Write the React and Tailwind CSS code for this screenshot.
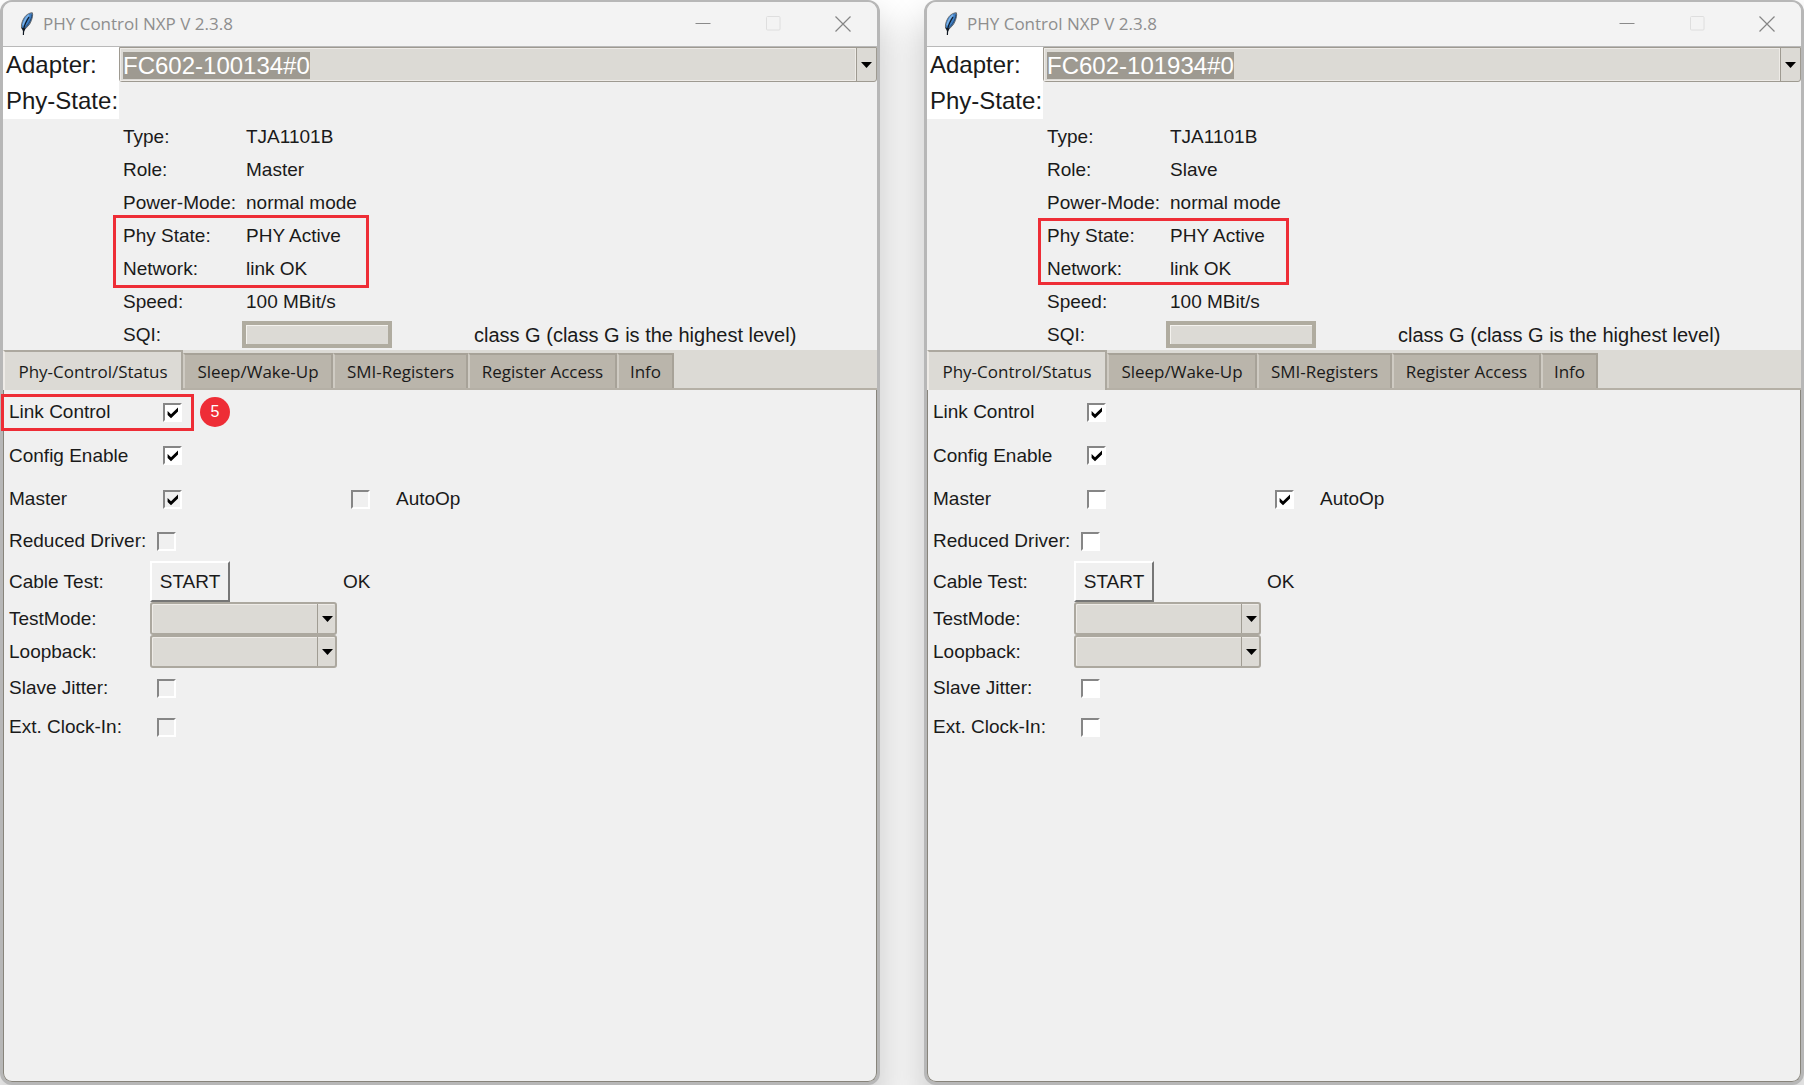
import { useId, useState } from "react";

const tabs = [
  { name: "Phy-Control/Status", width: "w-[180px]" },
  { name: "Sleep/Wake-Up", width: "w-[150px]" },
  { name: "SMI-Registers", width: "w-[135px]" },
  { name: "Register Access", width: "w-[149px]" },
  { name: "Info", width: "w-[57px]" },
];

function FeatherIcon() {
  return (
    <svg className="w-4 h-6 shrink-0" viewBox="0 0 16 24" aria-hidden="true">
      <path d="M13.4 0.8 C9.8 0.8 6.4 3.4 4.6 6.8 C2.8 10 2 13.6 2.6 16.2 L4.6 17.6 C8 16 11 12.4 12.4 8.4 C13.4 5.6 14 2.6 13.4 0.8Z" fill="#3f7fc4" stroke="#6b6b6b" strokeWidth="1" />
      <path d="M10 2.8 C7 5.6 5 9.4 4 13.4" fill="none" stroke="#7db4ea" strokeWidth="1.6" />
      <path d="M13 2.4 C12.6 7.4 9.6 12.6 5.6 16" fill="none" stroke="#24466e" strokeWidth="1" />
      <path d="M10 5 C7.4 9 5.4 13 4.6 17 L4.4 23" fill="none" stroke="#101822" strokeWidth="1.2" />
      <path d="M2.4 15.4 L6.6 16.4 L4.6 20.6Z" fill="#101822" />
    </svg>
  );
}

function Arrow() {
  return (
    <svg className="w-[11px] h-[6px]" viewBox="0 0 11 6" aria-hidden="true">
      <path d="M0 0 H11 L5.5 6Z" fill="#000" />
    </svg>
  );
}

function TitleBar() {
  return (
    <div className="h-[45px] flex items-center justify-between pl-4 pr-[26px] rounded-t-[9px] bg-[#f3f3f3] border-b border-[#b9b9b9]">
      <div className="flex items-center gap-2">
        <FeatherIcon />
        <h1 className="font-['Open_Sans',sans-serif] text-[17px] leading-6 text-[#8e8e8e]">PHY Control NXP V 2.3.8</h1>
      </div>
      <div className="flex items-center gap-[54px]">
        <button aria-label="Minimize" className="w-4 h-4 flex items-center">
          <svg className="w-4 h-4" viewBox="0 0 16 16"><path d="M0.5 7.5 H15.5" stroke="#8a8a8a" /></svg>
        </button>
        <button aria-label="Maximize" disabled className="w-4 h-4">
          <svg className="w-4 h-4" viewBox="0 0 16 16"><rect x="1.5" y="0.5" width="13.5" height="13.5" rx="1" fill="none" stroke="#dedede" /></svg>
        </button>
        <button aria-label="Close" className="w-4 h-4">
          <svg className="w-4 h-4" viewBox="0 0 16 16"><path d="M0.5 0.5 L15.5 15.5 M15.5 0.5 L0.5 15.5" stroke="#858585" strokeWidth="1.2" /></svg>
        </button>
      </div>
    </div>
  );
}

function StateRow({ label, children }) {
  return (
    <div className="h-[33px] flex items-center">
      <dt className="w-[124px] pl-px">{label}</dt>
      <dd className="flex items-center">{children}</dd>
    </div>
  );
}

function Check({ id, label, checked, grey }) {
  const [on, setOn] = useState(checked);
  return (
    <span className="grid w-[19px] h-[19px] shrink-0">
      <input
        id={id}
        type="checkbox"
        aria-label={label}
        checked={on}
        onChange={() => setOn(!on)}
        className={`appearance-none [grid-area:1/1] w-[19px] h-[19px] border-2 border-t-[#868686] border-l-[#868686] border-r-white border-b-white ${grey ? "bg-[#f0f0f0]" : "bg-white"}`}
      />
      {on && (
        <svg className="[grid-area:1/1] w-[19px] h-[19px] pointer-events-none" viewBox="0 0 19 19" aria-hidden="true">
          <path d="M4.6 8 L8 11.2 L15 4.6 V8.6 L8 15.2 L4.6 12Z" fill="#000" />
        </svg>
      )}
    </span>
  );
}

function Combo({ id }) {
  return (
    <span className="relative w-[187px] h-[33px]">
      <select id={id} className="appearance-none w-full h-full px-2 bg-[#dcdad5] border-2 border-[#aca89f] rounded-[3px] shadow-[inset_1px_1px_#eeebe7]">
        <option></option>
      </select>
      <span className="absolute right-0 inset-y-0 w-5 my-0.5 flex items-center justify-center border-l border-[#a09c93] pointer-events-none">
        <Arrow />
      </span>
    </span>
  );
}

function FormRow({ label, id, height, children }) {
  return (
    <div className={`flex items-center ${height}`}>
      <label htmlFor={id} className="w-[146px] pl-[5px] shrink-0 whitespace-nowrap">{label}</label>
      {children}
    </div>
  );
}

function PhyWindow({ adapter, role, frame, step, master, autoOp, greyed }) {
  const id = useId();
  const [tab, setTab] = useState(0);

  return (
    <section className="flex-1 min-w-0 flex flex-col border-[3px] border-t-2 border-[#b7b7b7] rounded-[12px] bg-[#f0f0f0] shadow-[0_24px_36px_6px_rgba(0,0,0,0.20)]">
      <TitleBar />

      {/* Adapter */}
      <div className="flex h-[36px]">
        <label htmlFor={id + "adapter"} className="w-[116px] shrink-0 pl-[3px] bg-white text-2xl leading-[36px]">Adapter:</label>
        <div className="flex-1 h-[35px] flex bg-[#dcdad5] border border-[#9e9a91] rounded-b-[3px]">
          <div className="flex-1 py-[3px] px-[2px] flex border border-[#eeebe7]">
            <select id={id + "adapter"} className="appearance-none h-[27px] bg-[#9e9a91] text-white text-2xl leading-[27px]">
              <option>{adapter}</option>
            </select>
          </div>
          <div className="w-5 flex items-center justify-center border-l border-[#9e9a91]">
            <Arrow />
          </div>
        </div>
      </div>
      <h2 className="w-[116px] h-[36px] pl-[3px] bg-white text-2xl leading-[36px]">Phy-State:</h2>

      {/* State of the chip */}
      <dl className="pl-[119px] pt-px h-[231px]">
        <StateRow label="Type:">TJA1101B</StateRow>
        <StateRow label="Role:">{role}</StateRow>
        <StateRow label="Power-Mode:">normal mode</StateRow>
        <div className="relative">
          <StateRow label="Phy State:">PHY Active</StateRow>
          <StateRow label="Network:">link OK</StateRow>
          <div className={`absolute border-[3px] border-[#ee2d36] pointer-events-none ${frame}`} />
        </div>
        <StateRow label="Speed:">100 MBit/s</StateRow>
        <StateRow label="SQI:">
          <div role="meter" aria-label="SQI" aria-valuenow={0} className="-ml-1 mr-[82px] w-[150px] h-[27px] border-4 border-[#b0aca0] bg-[#dcdad5] shadow-[inset_1px_1px_#f4f2ee]" />
          <span className="text-xl">class G (class G is the highest level)</span>
        </StateRow>
      </dl>

      {/* Tabs */}
      <div role="tablist" className="h-[40px] flex items-end bg-[#dcdad5] border-b-2 border-[#b5b0a6]">
        {tabs.map((t, i) => (
          <button
            key={t.name}
            role="tab"
            aria-selected={tab === i}
            onClick={() => setTab(i)}
            className={`${t.width} font-['Open_Sans',sans-serif] text-[17px] leading-none whitespace-nowrap border-2 border-b-0 ${
              tab === i
                ? "h-[40px] -mb-0.5 bg-[#dcdad5] border-t-[#aca89f] border-l-[#eeebe7] border-r-[#aca89f]"
                : "h-[35px] bg-[#bab5ab] border-t-[#a7a298] border-l-[#cfcbc3] border-r-[#a7a298]"
            }`}
          >
            {t.name}
          </button>
        ))}
      </div>

      {/* Controls */}
      <form className="flex-1 rounded-b-[9px] border-x border-b border-[#87847b]" onSubmit={(e) => e.preventDefault()}>
        <div className="relative">
          <FormRow label="Link Control" id={id + "link"} height="h-[44px]">
            <span className="pl-[13px]"><Check id={id + "link"} checked /></span>
          </FormRow>
          {step && (
            <>
              <div className="absolute -left-[3px] top-[4px] w-[193px] h-[37px] border-[3px] border-[#ee2d36] pointer-events-none" />
              <span className="absolute left-[196px] top-[7px] w-[30px] h-[30px] rounded-full bg-[#ee2d36] text-white text-base leading-[30px] text-center">{step}</span>
            </>
          )}
        </div>
        <FormRow label="Config Enable" id={id + "config"} height="h-[43px]">
          <span className="pl-[13px]"><Check id={id + "config"} checked /></span>
        </FormRow>
        <FormRow label="Master" id={id + "master"} height="h-[44px]">
          <span className="pl-[13px]"><Check id={id + "master"} checked={master} grey={greyed} /></span>
          <span className="pl-[169px]"><Check id={id + "auto"} checked={autoOp} grey={greyed} /></span>
          <label htmlFor={id + "auto"} className="pl-[26px]">AutoOp</label>
        </FormRow>
        <FormRow label="Reduced Driver:" id={id + "reduced"} height="h-[40px]">
          <span className="pl-[7px]"><Check id={id + "reduced"} checked={false} grey={greyed} /></span>
        </FormRow>
        <FormRow label="Cable Test:" id={id + "cable"} height="h-[41px]">
          <button id={id + "cable"} type="button" className="w-[80px] h-[41px] border-2 border-t-white border-l-white border-r-[#767676] border-b-[#767676]">START</button>
          <output className="pl-[113px]">OK</output>
        </FormRow>
        <FormRow label="TestMode:" id={id + "test"} height="h-[33px]">
          <Combo id={id + "test"} />
        </FormRow>
        <FormRow label="Loopback:" id={id + "loop"} height="h-[33px]">
          <Combo id={id + "loop"} />
        </FormRow>
        <FormRow label="Slave Jitter:" id={id + "jitter"} height="h-[40px]">
          <span className="pl-[7px]"><Check id={id + "jitter"} checked={false} grey={greyed} /></span>
        </FormRow>
        <FormRow label="Ext. Clock-In:" id={id + "clock"} height="h-[38px]">
          <span className="pl-[7px]"><Check id={id + "clock"} checked={false} grey={greyed} /></span>
        </FormRow>
      </form>
    </section>
  );
}

export default function App() {
  return (
    <main className="min-h-screen flex gap-11 bg-white overflow-hidden font-['Liberation_Sans',Arial,sans-serif] text-[19px] leading-6 text-[#1a1a1a]">
      <PhyWindow
        adapter="FC602-100134#0"
        role="Master"
        frame="-left-[9px] -top-1 w-[256px] h-[73px]"
        step={5}
        master={true}
        autoOp={false}
        greyed
      />
      <PhyWindow
        adapter="FC602-101934#0"
        role="Slave"
        frame="-left-[8px] -top-px w-[251px] h-[67px]"
        master={false}
        autoOp={true}
      />
    </main>
  );
}
